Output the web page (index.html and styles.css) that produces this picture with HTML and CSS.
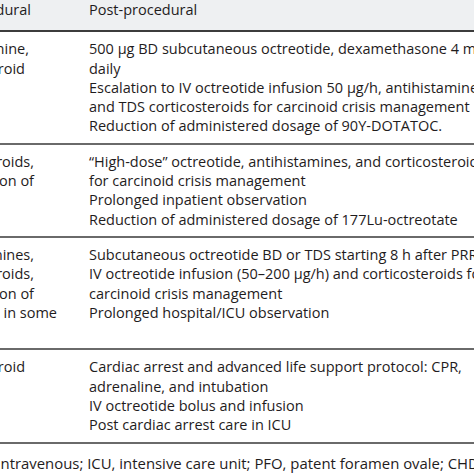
FILE: index.html
```html
<!DOCTYPE html>
<html>
<head>
<meta charset="utf-8">
<link rel="stylesheet" href="styles.css">
</head>
<body>
<div class="table">
  <div class="row head">
    <div class="c1"><span class="ln end31">Pre-procedural</span></div>
    <div class="c2"><span class="ln">Post-procedural</span></div>
  </div>
  <div class="row">
    <div class="c1">
      <span class="ln end29">Octreotide, antihistamine,</span>
      <span class="ln end25">and corticosteroid</span>
    </div>
    <div class="c2">
      <span class="ln">500 µg BD subcutaneous octreotide, dexamethasone 4 mg</span>
      <span class="ln">daily</span>
      <span class="ln">Escalation to IV octreotide infusion 50 µg/h, antihistamines,</span>
      <span class="ln">and TDS corticosteroids for carcinoid crisis management</span>
      <span class="ln">Reduction of administered dosage of 90Y-DOTATOC.</span>
    </div>
  </div>
  <div class="row">
    <div class="c1">
      <span class="ln">Octreotide, corticosteroids,</span>
      <span class="ln">and reduction of</span>
    </div>
    <div class="c2">
      <span class="ln">“High-dose” octreotide, antihistamines, and corticosteroids</span>
      <span class="ln">for carcinoid crisis management</span>
      <span class="ln">Prolonged inpatient observation</span>
      <span class="ln">Reduction of administered dosage of 177Lu-octreotate</span>
    </div>
  </div>
  <div class="row">
    <div class="c1">
      <span class="ln">Octreotide, antihistamines,</span>
      <span class="ln">and corticosteroids,</span>
      <span class="ln">and reduction of</span>
      <span class="ln end57">administered dose in some</span>
    </div>
    <div class="c2">
      <span class="ln">Subcutaneous octreotide BD or TDS starting 8 h after PRRT</span>
      <span class="ln">IV octreotide infusion (50–200 µg/h) and corticosteroids for</span>
      <span class="ln">carcinoid crisis management</span>
      <span class="ln">Prolonged hospital/ICU observation</span>
      <span class="ln">&nbsp;</span>
    </div>
  </div>
  <div class="row">
    <div class="c1">
      <span class="ln end25">Octreotide and corticosteroid</span>
    </div>
    <div class="c2">
      <span class="ln">Cardiac arrest and advanced life support protocol: CPR,</span>
      <span class="ln">adrenaline, and intubation</span>
      <span class="ln">IV octreotide bolus and infusion</span>
      <span class="ln">Post cardiac arrest care in ICU</span>
    </div>
  </div>
  <div class="foot">
    <span class="foot-text">IV, intravenous; ICU, intensive care unit; PFO, patent foramen ovale; CHD, carcinoid heart disease.</span>
  </div>
</div>
</body>
</html>
```

FILE: styles.css
```css
html, body {
  margin: 0;
  padding: 0;
  background: #ffffff;
  overflow: hidden;
}
body {
  width: 474px;
  height: 474px;
  font-family: "Open Sans", "Noto Sans", sans-serif;
  font-size: 14.5px;
  line-height: 19.3px;
  color: #1f1c1d;
}
.table {
  width: 1000px;
  margin-left: -166px;
}
.row {
  display: grid;
  grid-template-columns: 200px 1fr;
  padding: 7px 0;
  border-bottom: 2px solid #6a6a6a;
}
.row.head {
  background: #eef0f2;
  padding: 0 0 11px 0;
  border-bottom-color: #3c3c3c;
}
.c1 {
  display: flex;
  flex-direction: column;
  align-items: flex-end;
  white-space: nowrap;
}
.c2 {
  display: flex;
  flex-direction: column;
  align-items: flex-start;
  padding-left: 55px;
  white-space: nowrap;
}
.ln {
  display: block;
}
.end31 { margin-right: 3px; }
.end29 { margin-right: 5px; }
.end25 { margin-right: 9px; }
.end57 { margin-right: -23px; }
.foot {
  padding: 10px 0 0 142px;
  white-space: nowrap;
  font-size: 14.9px;
}
```
